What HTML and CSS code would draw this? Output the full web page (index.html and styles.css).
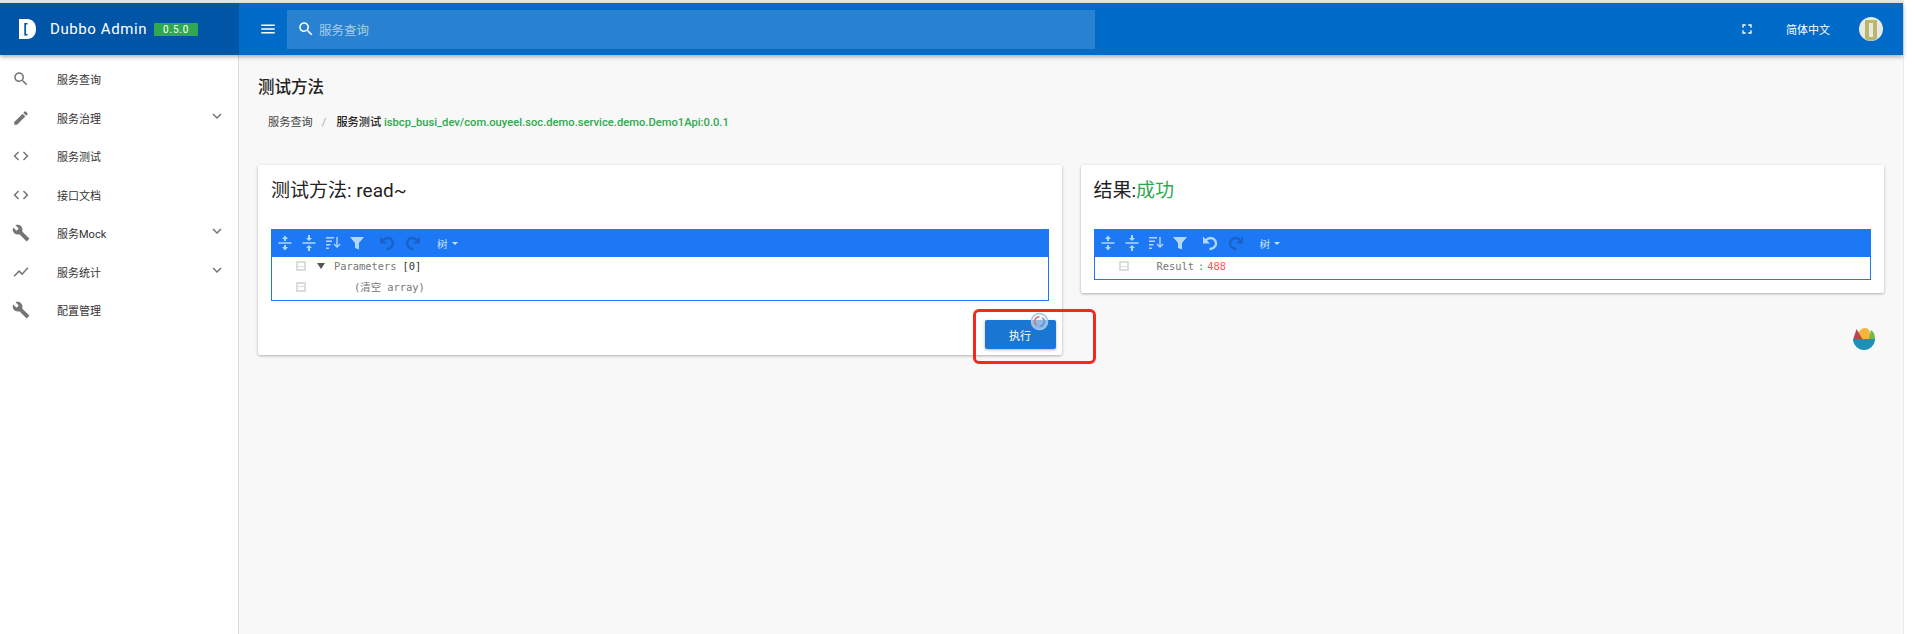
FILE: index.html
```html
<!DOCTYPE html>
<html lang="zh">
<head>
<meta charset="utf-8">
<title>Dubbo Admin</title>
<link rel="stylesheet" href="styles.css">
</head>
<body>
<div class="strip"></div>
<div class="app">
  <header class="header">
    <div class="brand">
      <svg class="logo" viewBox="0 0 17 20"><path fill="#fff" d="M0 0h8c5.500 0 9 4 9 10s-3.500 10-9 10H0z"/><path fill="#0055a7" d="M5.300 4h3.200v1.500H7v9.500h1.500v1.500H5.300z"/></svg>
      <span class="brand-name">Dubbo Admin</span>
      <span class="badge">0.5.0</span>
    </div>
    <svg class="menu-icon" viewBox="0 0 24 24"><path d="M3 18h18v-2H3v2zm0-5h18v-2H3v2zm0-7v2h18V6H3z"/></svg>
    <div class="search">
      <svg class="search-icon" viewBox="0 0 24 24"><path d="M15.5 14h-.79l-.28-.27C15.41 12.59 16 11.11 16 9.5 16 5.91 13.09 3 9.5 3S3 5.91 3 9.5 5.91 16 9.5 16c1.61 0 3.09-.59 4.23-1.57l.27.28v.79l5 4.99L20.49 19l-4.99-5zm-6 0C7.01 14 5 11.99 5 9.5S7.01 5 9.5 5 14 7.01 14 9.5 11.99 14 9.5 14z"/></svg>
      <span>服务查询</span>
    </div>
    <div class="header-right">
      <svg class="fs-icon" viewBox="0 0 24 24"><path d="M7 14H5v5h5v-2H7v-3zm-2-4h2V7h3V5H5v5zm12 7h-3v2h5v-5h-2v3zM14 5v2h3v3h2V5h-5z"/></svg>
      <span class="lang">简体中文</span>
      <svg class="avatar" viewBox="0 0 24 24"><circle cx="12" cy="12" r="12" fill="#e9e9e4"/><path fill="#b9b86a" d="M6 3h12v19a12 12 0 0 1-12 0z"/><path fill="#e9e9e4" d="M10 6h4v14h-4z"/></svg>
    </div>
  </header>
  <div class="content">
    <nav class="side">
      <a class="nav-item"><svg class="nav-icon" viewBox="0 0 24 24"><path d="M15.5 14h-.79l-.28-.27C15.41 12.59 16 11.11 16 9.5 16 5.91 13.09 3 9.5 3S3 5.91 3 9.5 5.91 16 9.5 16c1.61 0 3.09-.59 4.23-1.57l.27.28v.79l5 4.99L20.49 19l-4.99-5zm-6 0C7.01 14 5 11.99 5 9.5S7.01 5 9.5 5 14 7.01 14 9.5 11.99 14 9.5 14z"/></svg><span class="nav-text">服务查询</span></a>
      <a class="nav-item"><svg class="nav-icon" viewBox="0 0 24 24"><path d="M3 17.25V21h3.75L17.81 9.94l-3.75-3.75L3 17.25zM20.71 7.04c.39-.39.39-1.02 0-1.41l-2.34-2.34c-.39-.39-1.02-.39-1.41 0l-1.83 1.83 3.75 3.75 1.83-1.83z"/></svg><span class="nav-text">服务治理</span><svg class="chev" viewBox="0 0 24 24"><path d="M16.59 8.59L12 13.17 7.41 8.59 6 10l6 6 6-6z"/></svg></a>
      <a class="nav-item"><svg class="nav-icon" viewBox="0 0 24 24"><path d="M9.4 16.6L4.8 12l4.6-4.6L8 6l-6 6 6 6 1.4-1.4zm5.2 0l4.6-4.6-4.6-4.6L16 6l6 6-6 6-1.4-1.4z"/></svg><span class="nav-text">服务测试</span></a>
      <a class="nav-item"><svg class="nav-icon" viewBox="0 0 24 24"><path d="M9.4 16.6L4.8 12l4.6-4.6L8 6l-6 6 6 6 1.4-1.4zm5.2 0l4.6-4.6-4.6-4.6L16 6l6 6-6 6-1.4-1.4z"/></svg><span class="nav-text">接口文档</span></a>
      <a class="nav-item"><svg class="nav-icon" viewBox="0 0 24 24"><path d="M22.7 19l-9.1-9.1c.9-2.3.4-5-1.5-6.9-2-2-5-2.4-7.4-1.3L9 6 6 9 1.6 4.7C.4 7.1.9 10.1 2.9 12.1c1.9 1.9 4.6 2.4 6.9 1.5l9.1 9.1c.4.4 1 .4 1.4 0l2.3-2.3c.5-.4.5-1.1.1-1.4z"/></svg><span class="nav-text">服务Mock</span><svg class="chev" viewBox="0 0 24 24"><path d="M16.59 8.59L12 13.17 7.41 8.59 6 10l6 6 6-6z"/></svg></a>
      <a class="nav-item"><svg class="nav-icon" viewBox="0 0 24 24"><path d="M3.5 18.49l6-6.01 4 4L22 6.92l-1.41-1.41-7.09 7.97-4-4L2 16.99z"/></svg><span class="nav-text">服务统计</span><svg class="chev" viewBox="0 0 24 24"><path d="M16.59 8.59L12 13.17 7.41 8.59 6 10l6 6 6-6z"/></svg></a>
      <a class="nav-item"><svg class="nav-icon" viewBox="0 0 24 24"><path d="M22.7 19l-9.1-9.1c.9-2.3.4-5-1.5-6.9-2-2-5-2.4-7.4-1.3L9 6 6 9 1.6 4.7C.4 7.1.9 10.1 2.9 12.1c1.9 1.9 4.6 2.4 6.9 1.5l9.1 9.1c.4.4 1 .4 1.4 0l2.3-2.3c.5-.4.5-1.1.1-1.4z"/></svg><span class="nav-text">配置管理</span></a>
    </nav>
    <main class="main">
      <h1 class="page-title">测试方法</h1>
      <div class="crumbs">
        <span class="crumb">服务查询</span>
        <span class="crumb-sep">/</span>
        <span class="crumb-cur">服务测试 <span class="green">isbcp_busi_dev/com.ouyeel.soc.demo.service.demo.Demo1Api:0.0.1</span></span>
      </div>
      <div class="cards">
        <section class="card">
          <h2 class="card-title">测试方法: read~</h2>
          <div class="je">
            <div class="je-menu">
              <svg class="tb" viewBox="0 0 16 16"><path d="M1.500 7.300h13v1.400h-13zM8 .5l3 3.500H9v2H7V4H5zM8 15.500L5 12h2v-2h2v2h2z"/></svg>
              <svg class="tb" viewBox="0 0 16 16"><path d="M1.500 7.300h13v1.400h-13zM8 6L5 3h2V0h2v3h2zM8 10l3 3H9v3H7v-3H5z"/></svg>
              <svg class="tb" viewBox="0 0 16 16"><path d="M1 2h8v1.500H1zM1 5.500h6V7H1zM1 9h4.500v1.500H1zM1 12.500h3V14H1zM11.300 2h1.400v8.500l2-2 .8.9-3.500 3.600L8.500 9.400l.8-.9 2 2z"/></svg>
              <svg class="tb filter" viewBox="0 0 16 16"><path d="M1 2h14l-5 6v6.500l-4-1.500V8z"/></svg>
              <svg class="tb undo dim" viewBox="0 0 16 16"><path class="arc" d="M7.500 14C11 14 14 11.500 14 8.500 14 5.500 11.500 3 8.500 3 6.500 3 5 4 3.500 5.500"/><path d="M1 1.500v7h7z"/></svg>
              <svg class="tb redo dim" viewBox="0 0 16 16"><path class="arc" d="M8.500 14C5 14 2 11.500 2 8.500 2 5.500 4.500 3 7.500 3 9.500 3 11 4 12.500 5.500"/><path d="M15 1.500v7H8z"/></svg>
              <span class="mode">树<i class="caret"></i></span>
            </div>
            <div class="je-body">
              <div class="row"><i class="check"></i><i class="tri"></i><span class="key">Parameters</span><span class="count">[0]</span></div>
              <div class="row"><i class="check"></i><span class="empty">(清空 array)</span></div>
            </div>
          </div>
          <div class="actions"><button class="run">执行</button></div>
        </section>
        <section class="card">
          <h2 class="card-title">结果:<span class="green-normal">成功</span></h2>
          <div class="je">
            <div class="je-menu">
              <svg class="tb" viewBox="0 0 16 16"><path d="M1.500 7.300h13v1.400h-13zM8 .5l3 3.500H9v2H7V4H5zM8 15.500L5 12h2v-2h2v2h2z"/></svg>
              <svg class="tb" viewBox="0 0 16 16"><path d="M1.500 7.300h13v1.400h-13zM8 6L5 3h2V0h2v3h2zM8 10l3 3H9v3H7v-3H5z"/></svg>
              <svg class="tb" viewBox="0 0 16 16"><path d="M1 2h8v1.500H1zM1 5.500h6V7H1zM1 9h4.500v1.500H1zM1 12.500h3V14H1zM11.300 2h1.400v8.500l2-2 .8.9-3.500 3.600L8.500 9.400l.8-.9 2 2z"/></svg>
              <svg class="tb filter" viewBox="0 0 16 16"><path d="M1 2h14l-5 6v6.500l-4-1.500V8z"/></svg>
              <svg class="tb undo" viewBox="0 0 16 16"><path class="arc" d="M7.500 14C11 14 14 11.500 14 8.500 14 5.500 11.500 3 8.500 3 6.500 3 5 4 3.500 5.500"/><path d="M1 1.500v7h7z"/></svg>
              <svg class="tb redo dim" viewBox="0 0 16 16"><path class="arc" d="M8.500 14C5 14 2 11.500 2 8.500 2 5.500 4.500 3 7.500 3 9.500 3 11 4 12.500 5.500"/><path d="M15 1.500v7H8z"/></svg>
              <span class="mode">树<i class="caret"></i></span>
            </div>
            <div class="je-body je-body-single">
              <div class="row"><i class="check"></i><span class="res-key">Result</span><span class="colon">:</span><span class="num">488</span></div>
            </div>
          </div>
        </section>
      </div>
    </main>
  </div>
</div>
<div class="annotation"></div>
<svg class="spinner" viewBox="0 0 20 20">
  <circle cx="10" cy="10" r="8.500" fill="#eef3f8" fill-opacity=".55" stroke="#9cc6e2" stroke-width="1.500"/>
  <path d="M10 5a5 5 0 0 0-3 9" fill="none" stroke="#d9706a" stroke-width="1.500"/>
  <path d="M10 15a5 5 0 0 0 3-9" fill="none" stroke="#5e93c4" stroke-width="1.500"/>
</svg>
<svg class="float-logo" viewBox="0 0 24 24">
  <path fill="#f4b53f" d="M4 12C5 5 9 1 13 1s6 4 7 11z"/>
  <path fill="#6cb94e" d="M17 12l2-9c3 2 4 5 4 9z"/>
  <path fill="#b5474f" d="M1 13L4.500 2 11 13z"/>
  <path fill="#1d90b8" d="M1 12h22c0 6-5 11-11 11S1 18 1 12z"/>
</svg>
</body>
</html>
```
FILE: styles.css
```css
* { box-sizing: border-box; }
html, body { margin: 0; height: 100%; overflow: hidden; background: #fff; }
body { font-family: Roboto, "Noto Sans CJK SC", sans-serif; color: #222; position: relative; }
.strip { height: 3px; background: #e6e6e6; width: 1904px; }
.app { width: 1904px; height: 631px; display: flex; flex-direction: column; border-right: 1px solid #eaeaea; }

.header { height: 52px; flex: none; display: flex; align-items: center; background: #006bc9; color: #fff; box-shadow: 0 2px 4px rgba(0,0,0,.3); position: relative; z-index: 2; }
.brand { width: 239px; height: 100%; flex: none; display: flex; align-items: center; background: #0055a7; padding-left: 19px; }
.logo { width: 17px; height: 20px; flex: none; }
.brand-name { font-size: 15px; letter-spacing: .6px; margin-left: 14px; white-space: nowrap; }
.badge { width: 44px; height: 13px; margin-left: 7px; background: #2fa84f; border-radius: 1px; font-size: 10px; line-height: 13px; text-align: center; letter-spacing: .8px; }
.menu-icon { width: 18px; height: 18px; margin-left: 20px; fill: #fff; flex: none; }
.search { width: 808px; height: 39px; margin-left: 10px; background: rgba(255,255,255,.16); display: flex; align-items: center; padding-left: 10px; font-size: 12.500px; color: rgba(255,255,255,.6); }
.search-icon { width: 18px; height: 18px; fill: #fff; margin-right: 4px; }
.header-right { margin-left: auto; display: flex; align-items: center; }
.fs-icon { width: 16px; height: 16px; fill: #fff; }
.lang { font-size: 11px; margin-left: 31px; }
.avatar { width: 24px; height: 24px; margin-left: 29px; margin-right: 20px; }

.content { flex: 1; display: flex; min-height: 0; }
.side { width: 239px; flex: none; background: #fff; border-right: 1px solid #dcdcdc; padding-top: 5px; }
.nav-item { height: 38.500px; display: flex; align-items: center; position: relative; padding-left: 12px; font-size: 11px; color: #333; }
.nav-icon { width: 18px; height: 18px; fill: #757575; flex: none; }
.nav-text { margin-left: 27px; }
.chev { width: 18px; height: 18px; fill: #757575; position: absolute; left: 208px; top: 8px; }

.main { flex: 1; background: #f8f8f8; padding: 0 19px; min-width: 0; }
.page-title { margin: 21px 0 0; font-size: 16.500px; line-height: 24px; font-weight: 500; color: #222; }
.crumbs { display: flex; align-items: center; margin-top: 15px; padding-left: 10px; font-size: 11.200px; line-height: 16px; height: 16px; }
.crumb { color: #444; }
.crumb-sep { color: #aaa; margin: 0 10px 0 9px; }
.crumb-cur { font-weight: 500; color: #222; }
.green { color: #2fa84f; font-weight: 500; }
.green-normal { color: #2fa84f; }
.cards { display: grid; grid-template-columns: 1fr 1fr; gap: 19px; margin-top: 34px; align-items: start; }
.card { background: #fff; border-radius: 2px; box-shadow: 0 1px 3px rgba(0,0,0,.3); padding: 13px 13px 0; }
.card + .card { padding-bottom: 13px; }
.card-title { margin: 0 0 26px; font-size: 19px; line-height: 25px; font-weight: 400; color: #222; }

.je { border: 1.500px solid #1d78f6; }
.je-menu { height: 28px; background: #1d78f6; display: flex; align-items: center; padding-left: 6px; margin: -1px -1px 0; }
.tb { width: 16px; height: 16px; fill: #b4d6fc; margin-right: 8px; flex: none; }
.filter { width: 16px; height: 16px; margin-right: 14px; }
.undo { margin-right: 10px; width: 16px; height: 16px; }
.redo { width: 16px; height: 16px; margin-right: 14px; }
.arc { fill: none; stroke: #b4d6fc; stroke-width: 2.400; }
.dim { fill: #1a62c6; }
.dim .arc { stroke: #1a62c6; }
.mode { font-size: 10.500px; color: #c8e0fd; display: flex; align-items: center; margin-left: 2px; font-family: "Noto Sans CJK SC", sans-serif; }
.caret { width: 0; height: 0; border: 3px solid transparent; border-top: 3.500px solid #c8e0fd; border-bottom: 0; margin-left: 4px; }
.je-body { margin-top: -1px; padding-bottom: 3px; }
.je-body-single { padding-bottom: 2px; }
.row { height: 20.500px; display: flex; align-items: center; font-family: "DejaVu Sans Mono", "Noto Sans CJK SC", monospace; font-size: 10.400px; color: #777; padding-left: 24px; }
.check { width: 10px; height: 10px; border: 2px solid #dcdcdc; background: linear-gradient(#dcdcdc,#dcdcdc) center / 100% 1px no-repeat; flex: none; }
.tri { width: 0; height: 0; border: 4px solid transparent; border-top: 6px solid #555; border-bottom: 0; margin-left: 11px; flex: none; }
.key { margin-left: 9px; }
.count { margin-left: 6px; color: #333; }
.empty { margin-left: 48px; }
.res-key { margin-left: 28px; }
.colon { margin: 0 3px 0 4px; }
.num { color: #f55; }

.actions { display: flex; justify-content: flex-end; padding: 19px 0 6px; margin-right: -7px; }
.run { width: 71px; height: 29px; background: #1976d2; color: #fff; border: 0; border-radius: 2px; font: 11px "Noto Sans CJK SC", sans-serif; box-shadow: 0 1px 3px rgba(0,0,0,.3); }

.annotation { position: absolute; left: 973px; top: 309px; width: 123px; height: 55px; border: 3px solid #f5271f; border-radius: 6px; }
.spinner { position: absolute; left: 1030px; top: 312px; width: 19px; height: 19px; }
.float-logo { position: absolute; left: 1852px; top: 327px; width: 24px; height: 24px; }
```
